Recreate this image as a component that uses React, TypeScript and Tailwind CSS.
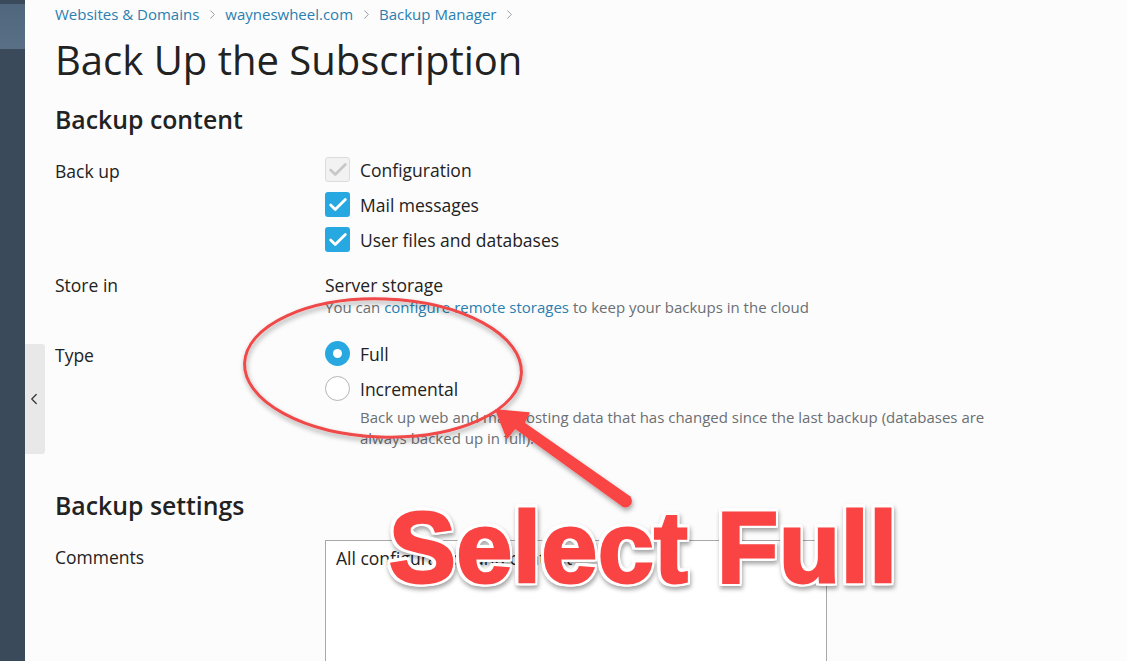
import { Check, ChevronLeft, ChevronRight } from "lucide-react";

const Crumb = ({ label }: { label: string }) => (
  <>
    <a className="text-[#2a7fb0]">{label}</a>
    <ChevronRight className="w-[15px] h-[15px] mx-[5.5px] text-[#8a8f94]" strokeWidth={1.4} />
  </>
);

const CheckRow = ({ label, disabled }: { label: string; disabled?: boolean }) => (
  <div className="flex items-center h-[25px] gap-[10px]">
    {disabled ? (
      <span className="w-[25px] h-[25px] rounded-[3px] border border-[#dcdcdc] bg-[#f2f2f2] flex items-center justify-center">
        <Check className="w-[22px] h-[22px] text-[#c8c8c8]" strokeWidth={3} />
      </span>
    ) : (
      <span className="w-[25px] h-[25px] rounded-[3px] bg-[#28a8e0] flex items-center justify-center">
        <Check className="w-[22px] h-[22px] text-white" strokeWidth={3} />
      </span>
    )}
    <span>{label}</span>
  </div>
);

export default function App() {
  return (
    <div className="relative flex h-[661px] w-[1127px] overflow-hidden bg-[#fcfcfc] text-[17.5px] leading-[24px] text-[#222222] font-['Open_Sans',sans-serif]">
      {/* Sidebar */}
      <div className="w-[25px] shrink-0 bg-[#3a4a5b] flex flex-col">
        <div className="h-[4px] bg-[#3a4a5b]" />
        <div className="h-[45px] bg-gradient-to-b from-[#50667c] to-[#5a7086]" />
      </div>

      {/* Collapse handle */}
      <div className="absolute left-[25px] top-[344px] w-[20px] h-[110px] bg-[#e8e8e8] rounded-r-[3px] flex items-center">
        <ChevronLeft className="w-[18px] h-[18px] text-[#333333]" strokeWidth={1.6} />
      </div>

      {/* Content */}
      <div className="flex-1 pl-[30px]">
        <div className="flex items-center h-[28px] text-[15px]">
          <Crumb label="Websites & Domains" />
          <Crumb label="wayneswheel.com" />
          <Crumb label="Backup Manager" />
        </div>
        <h1 className="mt-[2px] text-[40px] leading-[60px] text-[#222222]">Back Up the Subscription</h1>
        <h2 className="mt-[14px] text-[24.8px] leading-[30px] font-semibold">Backup content</h2>

        <div className="mt-[23px] flex">
          <div className="w-[270px] pt-[2px]">Back up</div>
          <div className="flex flex-col gap-[10px]">
            <CheckRow label="Configuration" disabled />
            <CheckRow label="Mail messages" />
            <CheckRow label="User files and databases" />
          </div>
        </div>

        <div className="mt-[21px] flex">
          <div className="w-[270px]">Store in</div>
          <div>
            <div>Server storage</div>
            <div className="text-[15px] leading-[21px] text-[#6b6f73]">
              You can <a className="text-[#2a7fb0]">configure remote storages</a> to keep your backups in the cloud
            </div>
          </div>
        </div>

        <div className="mt-[23px] flex">
          <div className="w-[270px] pt-[2px]">Type</div>
          <div className="flex flex-col">
            <div className="flex items-center h-[25px] gap-[10px]">
              <span className="w-[25px] h-[25px] rounded-full bg-[#28a8e0] flex items-center justify-center">
                <span className="w-[9px] h-[9px] rounded-full bg-white" />
              </span>
              <span>Full</span>
            </div>
            <div className="flex items-center h-[25px] gap-[10px] mt-[10px]">
              <span className="w-[25px] h-[25px] rounded-full border border-[#b5b5b5] bg-white" />
              <span>Incremental</span>
            </div>
            <div className="ml-[35px] mt-[6px] w-[640px] text-[15px] leading-[21px] text-[#6b6f73]">
              Back up web and mail hosting data that has changed since the last backup (databases are always backed up in full).
            </div>
          </div>
        </div>

        <h2 className="mt-[41px] text-[24.8px] leading-[30px] font-semibold">Backup settings</h2>

        <div className="mt-[20px] flex">
          <div className="w-[270px] pt-[5px]">Comments</div>
          <div className="w-[502px] h-[200px] border border-[#a8a8a8] bg-white px-[10px] py-[5px]">
            All configuration and content
          </div>
        </div>
      </div>

      {/* Annotation: ellipse and arrow */}
      <svg className="absolute left-0 top-0 pointer-events-none" width="1127" height="661" viewBox="0 0 1127 661" fill="none">
        <defs>
          <filter id="shade" x="-20%" y="-20%" width="140%" height="140%">
            <feDropShadow dx="1" dy="3" stdDeviation="2.5" floodColor="#000000" floodOpacity="0.35" />
          </filter>
        </defs>
        <g filter="url(#shade)">
          <ellipse cx="383" cy="368" rx="138.5" ry="69" stroke="#f04848" strokeWidth="3" transform="rotate(2 383 368)" />
          <path
            d="M496 410 L529 413 L524 423 L630 497 Q633 503 628 506 Q624 508 620 504 L515 428 L507 438 Z"
            fill="#fa4444"
            stroke="#fa4444"
            strokeWidth="1.5"
            strokeLinejoin="round"
          />
        </g>
      </svg>

      {/* Annotation: caption */}
      <span className="absolute left-[389px] top-[487px] text-[100px] leading-[120px] tracking-[0.8px] font-bold whitespace-nowrap text-[#fa4444] font-['Liberation_Sans',sans-serif] [-webkit-text-stroke:3px_#fa4444] [filter:drop-shadow(2.5px_0_0_#ffffff)_drop-shadow(-2.5px_0_0_#ffffff)_drop-shadow(0_2.5px_0_#ffffff)_drop-shadow(0_-2.5px_0_#ffffff)_drop-shadow(1px_3px_2px_rgba(0,0,0,0.35))]">
        Select Full
      </span>
    </div>
  );
}
